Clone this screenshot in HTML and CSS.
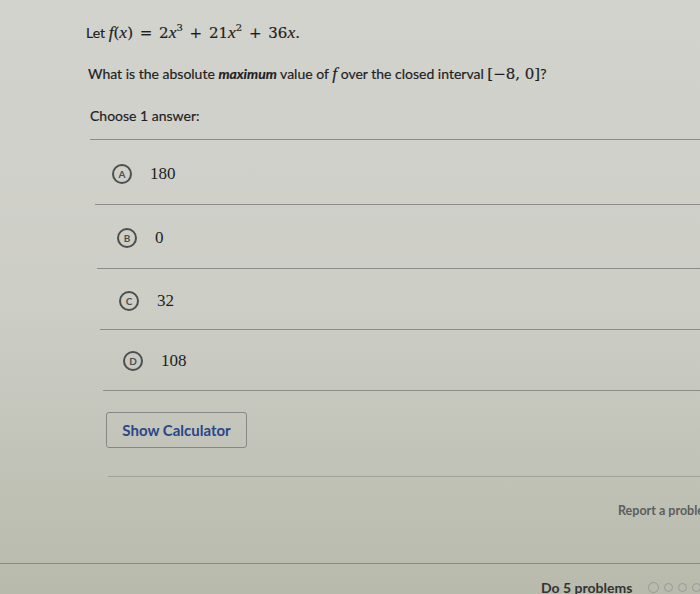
FILE: index.html
```html
<!DOCTYPE html>
<html>
<head>
<meta charset="utf-8">
<link rel="stylesheet" href="styles.css">
</head>
<body>
<div class="page">
  <div class="content">
    <p class="stmt">Let <span class="m"><i>f</i>(<i>x</i>) <span class="op">=</span> 2<i>x</i><sup>3</sup> <span class="op">+</span> 21<i>x</i><sup>2</sup> <span class="op">+</span> 36<i>x</i>.</span></p>
    <p class="q">What is the absolute <b><i>maximum</i></b> value of <span class="m"><i>f</i></span> over the closed interval <span class="m">[−8, 0]</span>?</p>
    <p class="choose">Choose 1 answer:</p>
    <div class="opts">
      <div class="opt o1"><span class="circ">A</span><span class="val">180</span></div>
      <div class="opt o2"><span class="circ">B</span><span class="val">0</span></div>
      <div class="opt o3"><span class="circ">C</span><span class="val">32</span></div>
      <div class="opt o4"><span class="circ">D</span><span class="val">108</span></div>
    </div>
    <div class="calc-row"><button class="calc">Show Calculator</button></div>
    <div class="report-row"><span class="report">Report a problem</span></div>
  </div>
  <div class="footer">
    <span class="do">Do 5 problems</span>
    <span class="dots"><span class="dot big"></span><span class="dot"></span><span class="dot"></span><span class="dot"></span></span>
  </div>
</div>
</body>
</html>
```
FILE: styles.css
```css
html, body { margin: 0; padding: 0; }
body {
  width: 700px; height: 594px; overflow: hidden;
  font-family: Lato, "Liberation Sans", sans-serif;
  color: #1f1f1f;
  background: linear-gradient(180deg, #d3d3ce 0%, #cdcec6 50%, #b8baac 100%);
}
.page { height: 594px; display: flex; flex-direction: column; }
.content { flex: 1; padding-left: 86px; }
p { margin: 0; }
.stmt { font-size: 14px; padding-top: 22px; height: 21px; }
.m { font-family: "DejaVu Serif", "Liberation Serif", serif; font-size: 15px; }
.m i { font-family: "Liberation Serif", serif; font-size: 17.5px; }
.m sup { font-size: 10px; vertical-align: 7px; line-height: 0; }
.op { margin: 0 2px; }
.q { font-size: 14px; padding-top: 20px; padding-left: 2px; height: 21px; -webkit-text-stroke: 0.2px #1f1f1f; }
.stmt, .choose { -webkit-text-stroke: 0.2px #1f1f1f; }
.choose { font-size: 14px; padding-top: 23px; padding-left: 4px; height: 20px; }
.opts { margin-top: 12px; }
.opt {
  border-top: 1.5px solid #8c8c88;
  display: flex; align-items: center; box-sizing: border-box;
  font-family: "Liberation Serif", serif; font-size: 17px;
}
.o1 { margin-left: 4px; padding-left: 22px; height: 65px; padding-top: 4px; }
.o2 { margin-left: 9px; padding-left: 22px; height: 64px; padding-top: 3px; }
.o3 { margin-left: 11px; padding-left: 22px; height: 61px; padding-top: 3px; }
.o4 { margin-left: 14px; padding-left: 23px; height: 61px; padding-top: 1px; }
.circ {
  width: 16px; height: 16px; border: 2px solid #4e4e4e;
  border-radius: 50%; display: inline-flex; align-items: center; justify-content: center;
  font-family: Lato, sans-serif; font-size: 10px; font-weight: bold; color: #4e4e4e;
}
.val { margin-left: 18px; color: #1e1e1e; }
.calc-row {
  margin-left: 17px; border-top: 1.5px solid #8c8c88;
  padding-top: 21px; height: 86px; box-sizing: border-box;
}
.calc {
  width: 141px; height: 36px; border: 1.5px solid #878784; border-radius: 3px;
  background: transparent; color: #2a4589; font-family: Lato, sans-serif;
  font-size: 15px; font-weight: bold; padding: 0; margin-left: 3px;
}
.report-row {
  margin-left: 22px; border-top: 1.5px solid #a0a098;
  height: 85px; text-align: right; padding-top: 22px; box-sizing: border-box;
  overflow: hidden; white-space: nowrap;
}
.report { display: inline-block; width: 120px; text-align: left; font-size: 12.5px; font-weight: bold; color: #5d5d5d; margin-right: -38px; }
.footer {
  height: 31px; border-top: 1.5px solid #8a8b82;
  display: flex; align-items: flex-start; padding-left: 541px; padding-top: 15px; box-sizing: border-box;
  white-space: nowrap; overflow: hidden;
}
.do { font-size: 14px; font-weight: bold; color: #333; }
.dots { display: inline-flex; gap: 5px; margin-left: 16px; margin-top: 4px; }
.dot { width: 7px; height: 7px; border: 1.5px solid #999; border-radius: 50%; }
.dot.big { width: 9px; height: 9px; margin-top: -1px; }
```
